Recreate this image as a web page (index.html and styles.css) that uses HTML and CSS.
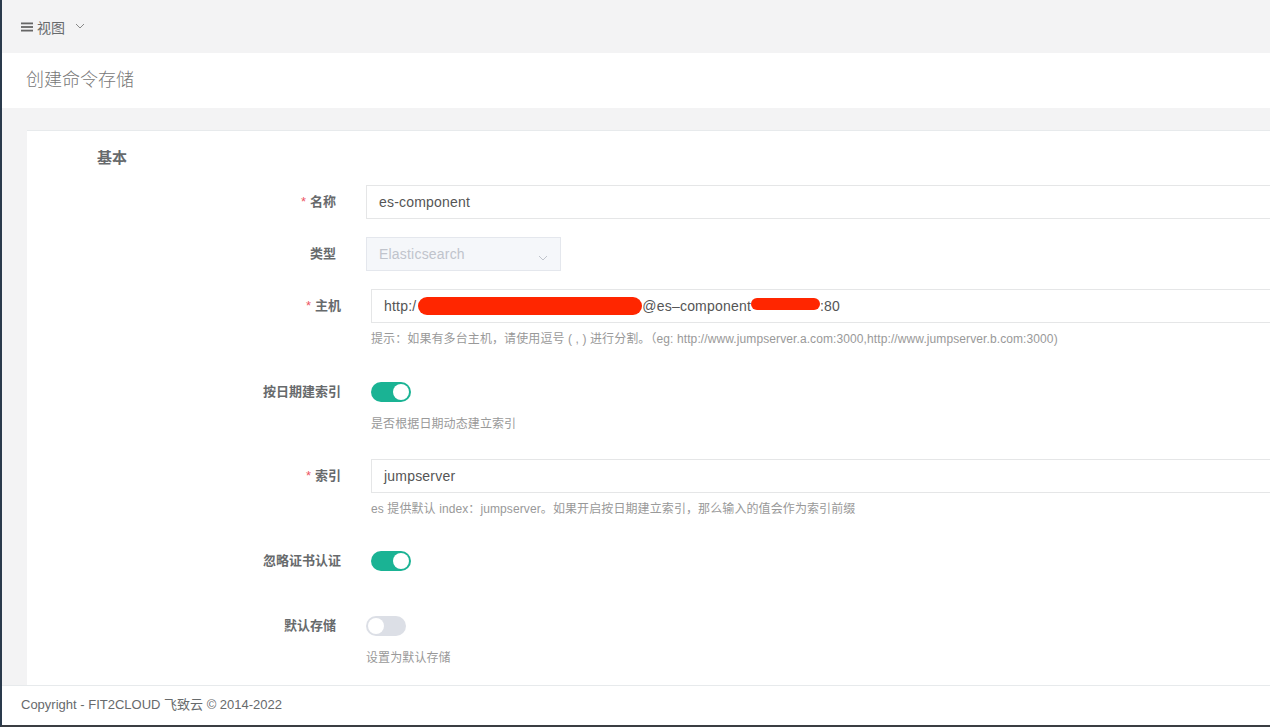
FILE: index.html
```html
<!DOCTYPE html>
<html lang="zh-CN">
<head>
<meta charset="utf-8">
<title>创建命令存储</title>
<link rel="stylesheet" href="styles.css">
</head>
<body>
<div class="page">
  <div class="topbar">
    <svg class="menu-icon" width="12" height="10" viewBox="0 0 12 10"><rect x="0" y="0.5" width="12" height="1.8" fill="#666"/><rect x="0" y="4.1" width="12" height="1.8" fill="#666"/><rect x="0" y="7.7" width="12" height="1.8" fill="#666"/></svg>
    <span class="view-text">视图</span>
    <svg class="view-chevron" width="10" height="6" viewBox="0 0 10 6"><path d="M1 1 L5 5 L9 1" fill="none" stroke="#888" stroke-width="1"/></svg>
  </div>
  <div class="page-header">创建命令存储</div>
  <div class="content">
    <div class="card">
      <div class="section-title">基本</div>

      <div class="row row-a row-name">
        <div class="label"><span class="req">*</span>名称</div>
        <div class="field">
          <div class="input">es-component</div>
        </div>
      </div>

      <div class="row row-a row-type">
        <div class="label">类型</div>
        <div class="field">
          <div class="select">Elasticsearch
            <svg class="select-arrow" width="10" height="6" viewBox="0 0 10 6"><path d="M1 1 L5 5 L9 1" fill="none" stroke="#c0c4cc" stroke-width="1"/></svg>
          </div>
        </div>
      </div>

      <div class="row row-b row-host">
        <div class="label"><span class="req">*</span>主机</div>
        <div class="field">
          <div class="input">http:/<span class="redact redact-1"></span>@es–component<span class="redact redact-2"></span>:80</div>
          <div class="hint">提示：如果有多台主机，请使用逗号 ( , ) 进行分割。（eg: http://www.jumpserver.a.com:3000,http://www.jumpserver.b.com:3000)</div>
        </div>
      </div>

      <div class="row row-b row-date">
        <div class="label">按日期建索引</div>
        <div class="field">
          <div class="switch-wrap"><span class="switch on"><span class="knob"></span></span></div>
          <div class="hint hint-sw">是否根据日期动态建立索引</div>
        </div>
      </div>

      <div class="row row-b row-index">
        <div class="label"><span class="req">*</span>索引</div>
        <div class="field">
          <div class="input">jumpserver</div>
          <div class="hint">es 提供默认 index：jumpserver。如果开启按日期建立索引，那么输入的值会作为索引前缀</div>
        </div>
      </div>

      <div class="row row-b row-cert">
        <div class="label">忽略证书认证</div>
        <div class="field">
          <div class="switch-wrap"><span class="switch on"><span class="knob"></span></span></div>
        </div>
      </div>

      <div class="row row-a row-default">
        <div class="label">默认存储</div>
        <div class="field">
          <div class="switch-wrap"><span class="switch off"><span class="knob"></span></span></div>
          <div class="hint hint-sw">设置为默认存储</div>
        </div>
      </div>
    </div>
  </div>
  <div class="footer">Copyright - FIT2CLOUD 飞致云 © 2014-2022</div>
</div>
</body>
</html>
```
FILE: styles.css
```css
* { box-sizing: border-box; }
html, body {
  margin: 0;
  padding: 0;
  width: 1270px;
  height: 727px;
  overflow: hidden;
}
body {
  font-family: "Liberation Sans", Arial, "Noto Sans CJK SC", sans-serif;
  color: #676a6c;
  background: #f3f3f4;
}
.page {
  width: 1270px;
  height: 727px;
  display: flex;
  flex-direction: column;
  border-left: 2px solid #2a3a4c;
  border-bottom: 2px solid #3a3d42;
  overflow: hidden;
}
.topbar {
  height: 53px;
  flex: none;
  background: #f3f3f4;
  display: flex;
  align-items: center;
  padding-left: 19px;
  padding-top: 1px;
}
.menu-icon { display: block; }
.view-text {
  font-size: 14px;
  color: #676a6c;
  margin-left: 4px;
}
.view-chevron {
  margin-left: 10px;
  margin-top: -3px;
}
.page-header {
  height: 55px;
  flex: none;
  background: #fff;
  padding-left: 24px;
  line-height: 54px;
  font-size: 18px;
  font-weight: 300;
  color: #777;
}
.content {
  flex: 1;
  min-height: 0;
  overflow: hidden;
  padding: 22px 0 0 25px;
  background: #f3f3f4;
}
.card {
  width: 1300px;
  height: 700px;
  background: #fff;
  border-top: 1px solid #e7eaec;
  padding-top: 17px;
}
.section-title {
  padding-left: 70px;
  font-size: 15px;
  font-weight: bold;
  line-height: 20px;
  color: #676a6c;
  margin-bottom: 17px;
}
.row {
  display: flex;
  align-items: flex-start;
}
.label {
  flex: none;
  height: 34px;
  line-height: 34px;
  text-align: right;
  padding-right: 30px;
  font-size: 13px;
  font-weight: bold;
  color: #676a6c;
}
.row-a .label { width: 339px; }
.row-b .label { width: 344px; }
.req {
  color: #ed5565;
  margin-right: 4px;
  font-weight: normal;
}
.field {
  flex: 1;
  min-width: 0;
}
.input {
  height: 34px;
  line-height: 32px;
  border: 1px solid #e5e6e7;
  padding-left: 12px;
  font-size: 14px;
  letter-spacing: 0.2px;
  color: #555;
  white-space: nowrap;
}
.select {
  position: relative;
  width: 195px;
  height: 34px;
  line-height: 32px;
  border: 1px solid #e4e7ed;
  background: #f5f7fa;
  padding-left: 12px;
  font-size: 14px;
  letter-spacing: 0.2px;
  color: #c0c4cc;
}
.select-arrow {
  position: absolute;
  right: 12px;
  top: 17px;
}
.redact {
  display: inline-block;
  vertical-align: middle;
  background: #ff2600;
  border-radius: 9px;
}
.redact-1 {
  width: 224px;
  height: 18px;
  margin-top: -2px;
  margin-left: 2px;
}
.redact-2 {
  width: 69px;
  height: 12px;
  border-radius: 6px;
  margin-top: -6px;
}
.hint {
  margin-top: 6px;
  line-height: 20px;
  font-size: 12px;
  letter-spacing: 0.1px;
  color: #999;
  white-space: nowrap;
}
.hint-sw { margin-top: 5px; }
.switch-wrap {
  height: 34px;
  display: flex;
  align-items: center;
}
.switch {
  position: relative;
  display: inline-block;
  width: 40px;
  height: 20px;
  border-radius: 10px;
}
.switch.on { background: #1ab394; }
.switch.off { background: #dcdfe6; }
.knob {
  position: absolute;
  top: 2px;
  width: 16px;
  height: 16px;
  border-radius: 50%;
  background: #fff;
}
.switch.on .knob { left: 22px; }
.switch.off .knob { left: 2px; }

.row-name { margin-bottom: 18px; }
.row-type { margin-bottom: 18px; }
.row-host { margin-bottom: 26px; }
.row-date { margin-bottom: 25px; }
.row-index { margin-bottom: 25px; }
.row-cert { margin-bottom: 31px; }

.footer {
  flex: none;
  background: #fff;
  border-top: 1px solid #e7eaec;
  height: 40px;
  line-height: 38px;
  padding-left: 19px;
  font-size: 13px;
  color: #676a6c;
}
```
